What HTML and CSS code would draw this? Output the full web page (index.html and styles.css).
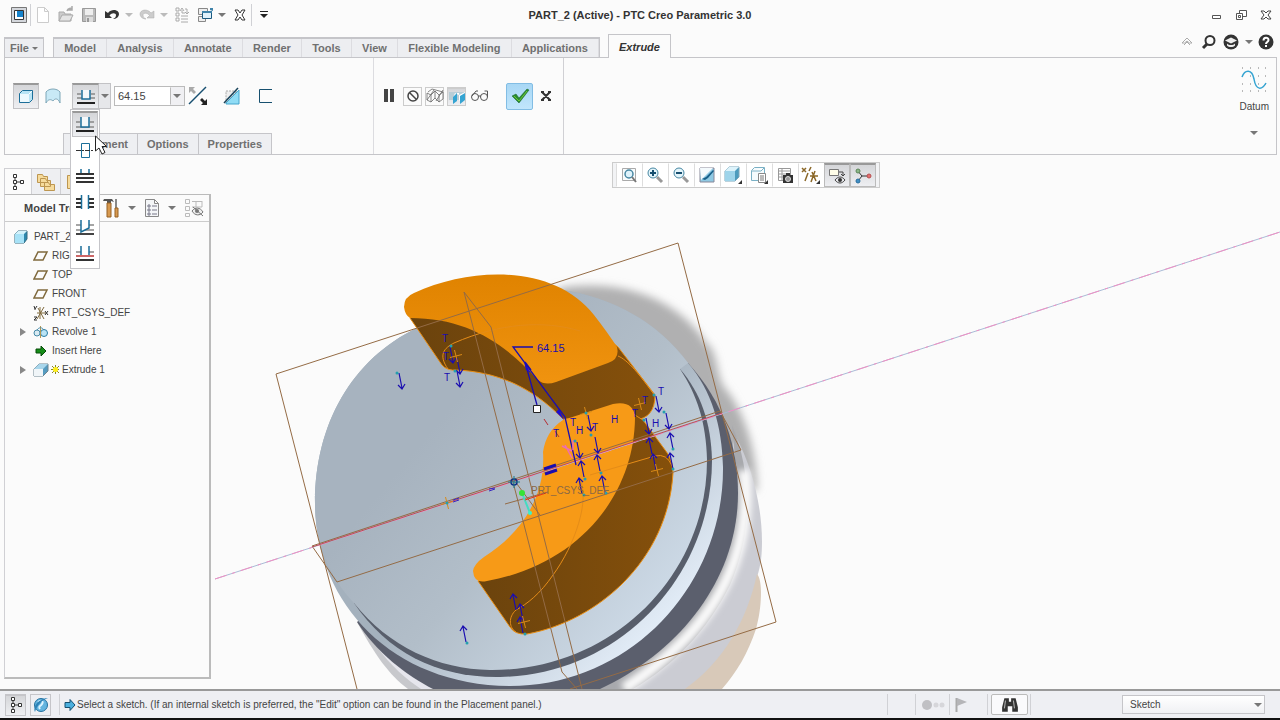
FILE: index.html
```html
<!DOCTYPE html>
<html lang="en">
<head>
    <meta charset="UTF-8">
    <meta name="viewport" content="width=device-width, initial-scale=1.0">
    <title>PART_2 (Active) - PTC Creo Parametric 3.0</title>
    <link rel="stylesheet" href="styles.css">
</head>
<body>
    <div class="window">
        <header class="titlebar">
            <div class="quick">
                <button class="tool app" aria-label="Window menu"><svg width="16" height="16" viewBox="0 0 16 16"><path d="M.5 .5h15v15H.5z" fill="#d4d7dc" stroke="#777"/><path d="M3.500 3.500h9v9h-9z" fill="#fff" stroke="#333"/><path d="M6 4h6v6H6z" fill="#1583cc"/></svg></button>
                <span class="sep"></span>
                <button class="tool" aria-label="New"><svg width="16" height="18" viewBox="0 0 16 18"><path d="M2.500 1.500h7l4 4v11h-11zM9.500 1.500v4h4" fill="#fff" stroke="#ccc"/></svg></button>
                <button class="tool" aria-label="Open"><svg width="18" height="18" viewBox="0 0 18 18"><path d="M2 15V6h5l1 2h6v7z" fill="#ccc" stroke="#aaa"/><path d="M2 15l3-6h11l-3 6z" fill="#e4e4e4" stroke="#aaa"/><path d="M10 5c1-3 4-3 5-2M15 0v4h-4" fill="none" stroke="#aaa" stroke-width="1.500"/></svg></button>
                <button class="tool" aria-label="Save"><svg width="16" height="16" viewBox="0 0 16 16"><path d="M1.500 1.500h13v13h-13z" fill="#bbb" stroke="#999"/><path d="M4 2h8v6H4z" fill="#eee"/><path d="M5 10h7v5H5z" fill="#ddd"/><path d="M6 11h2v4H6z" fill="#999"/></svg></button>
                <button class="tool" aria-label="Undo"><svg width="16" height="16" viewBox="0 0 16 16"><path d="M1 4v7h7L5.500 8.500C8 5 12 6 12 8c0 2-1 3-3 4 3 0 6-2 6-5 0-4-7-6-11-1z" fill="#333"/></svg></button>
                <button class="tool drop" aria-label="Undo list"><i class="caret light"></i></button>
                <button class="tool" aria-label="Redo"><svg width="16" height="16" viewBox="0 0 16 16"><path d="M15 4v7H8l2.500-2.500C8 5 4 6 4 8c0 2 1 3 3 4-3 0-6-2-6-5 0-4 7-6 11-1z" fill="#ccc" stroke="#aaa" stroke-width=".5"/></svg></button>
                <button class="tool drop" aria-label="Redo list"><i class="caret light"></i></button>
                <button class="tool" aria-label="Regenerate"><svg width="16" height="16" viewBox="0 0 16 16"><path d="M2 1h3v3H2zM2 6h3v3H2zM2 11h3v3H2zM7 9h7M7 12h7M7 15h7M8 3v3h3M6 4l2-3 2 3M13 6V2h-2M11 5l2 2 2-2" fill="none" stroke="#aaa"/></svg></button>
                <button class="tool" aria-label="Windows"><svg width="18" height="16" viewBox="0 0 18 16"><path d="M2.500 1.500h9v6h-9zM2.500 9.500h7v5h-7z" fill="#eee" stroke="#888"/><path d="M6.500 4.500h9v7h-9z" fill="#dff1fb" stroke="#1b5a80"/><path d="M6 4h10v2H6zM14 3V1h3v3" fill="#3f83aa"/></svg></button>
                <button class="tool drop" aria-label="Window list"><i class="caret"></i></button>
                <button class="tool" aria-label="Close window"><svg width="14" height="14" viewBox="0 0 14 14"><path d="M2 2h3l2 3 2-3h3L9 7l3 5H9L7 9l-2 3H2l3-5z" fill="#fff" stroke="#333"/></svg></button>
                <span class="sep"></span>
                <button class="tool drop" aria-label="Customize toolbar"><svg width="10" height="10" viewBox="0 0 10 10"><path d="M1 1h8v1H1zM1 4h8L5 8z" fill="#222"/></svg></button>
            </div>
            <h1>PART_2 (Active) - PTC Creo Parametric 3.0</h1>
            <div class="window-buttons">
                <button class="tool" aria-label="Minimize"><svg width="12" height="12" viewBox="0 0 12 12"><path d="M2.500 6.500h8v3h-8z" fill="#fff" stroke="#555"/></svg></button>
                <button class="tool" aria-label="Restore"><svg width="12" height="12" viewBox="0 0 12 12"><path d="M4.500 1.500h7v6h-7z" fill="#fff" stroke="#555"/><path d="M1.500 4.500h6v6h-6z" fill="#fff" stroke="#555"/><path d="M3.500 6.500h2v2h-2z" fill="none" stroke="#555"/></svg></button>
                <button class="tool" aria-label="Close"><svg width="14" height="14" viewBox="0 0 14 14"><path d="M2 3h3l2 2 2-2h3L9 7l3 4H9L7 9l-2 2H2l3-4z" fill="#fff" stroke="#444"/></svg></button>
            </div>
        </header>

        <nav class="tabs">
            <button class="file-tab">File <i class="caret"></i></button>
            <div class="tab-group">
                <button>Model</button>
                <button>Analysis</button>
                <button>Annotate</button>
                <button>Render</button>
                <button>Tools</button>
                <button>View</button>
                <button>Flexible Modeling</button>
                <button>Applications</button>
            </div>
            <button class="active-tab">Extrude</button>
            <div class="help">
                <button class="tool" aria-label="Minimize ribbon"><svg width="12" height="10" viewBox="0 0 12 10"><path d="M1 6l5-5 5 5H8.500L6 4 3.500 6zM3 8l3-3 3 3" fill="#fff" stroke="#aaa"/></svg></button>
                <button class="tool" aria-label="Search"><svg width="16" height="16" viewBox="0 0 16 16"><circle cx="9" cy="6.500" r="4.500" fill="none" stroke="#333" stroke-width="2"/><path d="M6 10l-4 4" stroke="#333" stroke-width="3"/></svg></button>
                <button class="tool" aria-label="Learning"><svg width="16" height="16" viewBox="0 0 16 16"><circle cx="8" cy="8" r="7.500" fill="#333"/><path d="M2 6.500l6-3 6 3-6 3z" fill="#eee"/><path d="M4 9.500c2 2 6 2 8 0v2c-2 2-6 2-8 0z" fill="#eee"/></svg></button>
                <button class="tool drop" aria-label="Learning list"><i class="caret"></i></button>
                <button class="tool" aria-label="Help"><svg width="16" height="16" viewBox="0 0 16 16"><circle cx="8" cy="8" r="7.500" fill="#333"/><path d="M5.500 6.500C5.500 3 10.500 3 10.500 6c0 2-2.500 2-2.500 4M8 11v2" fill="none" stroke="#fff" stroke-width="2"/></svg></button>
            </div>
        </nav>

        <section class="ribbon">
            <div class="dashboard">
                <div class="controls">
                    <button class="tool pressed solid" aria-label="Solid"><svg width="16" height="16" viewBox="0 0 16 16"><path d="M1.500 4.500l3-3h10v9l-3 3h-10z" fill="#b9e4f5" stroke="#1b6e99"/><path d="M2 5h9v8H2z" fill="#edf9fe"/><path d="M11 5l3-3" stroke="#fff"/></svg></button>
                    <button class="tool" aria-label="Surface"><svg width="18" height="18" viewBox="0 0 18 18"><path d="M2 5c3-4 11-4 14 0v11c-2-5-5-5-7-2-2-2-5-2-7 2z" fill="#c8e9f6" stroke="#7fa7b8"/></svg></button>
                    <div class="depth">
                        <button class="tool pressed" aria-label="Depth: blind"><svg width="20" height="18" viewBox="0 0 20 18"><path d="M1 6h4M15 6h4M1 10h18" stroke="#888" stroke-width="1.500"/><path d="M6 2v9h8V2" fill="#f4f8fa" stroke="#1b6e99" stroke-width="1.500"/><path d="M1 15h18" stroke="#222" stroke-width="2"/></svg></button>
                        <button class="tool arrow" aria-label="Depth options"><i class="caret"></i></button>
                        <div class="menu">
                            <button class="tool pressed" aria-label="Blind"><svg width="20" height="18" viewBox="0 0 20 18"><path d="M1 6h4M15 6h4M1 11h18" stroke="#888" stroke-width="1.500"/><path d="M6 1v10h8V1" fill="#f4f8fa" stroke="#1b6e99" stroke-width="1.500"/><path d="M1 15h18" stroke="#222" stroke-width="2"/></svg></button>
                            <button class="tool" aria-label="Symmetric"><svg width="20" height="18" viewBox="0 0 20 18"><path d="M6.500 2.500h8v14h-8z" fill="#fff" stroke="#1b6e99"/><path d="M1 9.500h18" stroke="#333" stroke-dasharray="5 1 2 1"/></svg></button>
                            <button class="tool" aria-label="To next"><svg width="20" height="18" viewBox="0 0 20 18"><path d="M6 2v5M14 2v5" stroke="#1b6e99" stroke-width="1.500"/><path d="M1 7h18M1 11h18M1 15h18" stroke="#333" stroke-width="2"/></svg></button>
                            <button class="tool" aria-label="Through all"><svg width="20" height="18" viewBox="0 0 20 18"><path d="M1 6h5M14 6h5M1 10h5M14 10h5M1 14h5M14 14h5" stroke="#333" stroke-width="2"/><path d="M6.500 2v14M13.500 2v14" stroke="#1b6e99" stroke-width="1.500"/></svg></button>
                            <button class="tool" aria-label="Through until"><svg width="20" height="18" viewBox="0 0 20 18"><path d="M1 6h5M14 6h5M1 11h18" stroke="#888" stroke-width="1.500"/><path d="M6 1v12l8-4V1" fill="#fff" stroke="#1b6e99" stroke-width="1.500"/><path d="M1 15h18" stroke="#444" stroke-width="2"/></svg></button>
                            <button class="tool" aria-label="To selected"><svg width="20" height="18" viewBox="0 0 20 18"><path d="M1 7h5M14 7h5" stroke="#888" stroke-width="1.500"/><path d="M6 1v9M14 1v9" stroke="#1b6e99" stroke-width="1.500"/><path d="M1 11h18" stroke="#b33" stroke-width="1.500"/><path d="M1 15h18" stroke="#333" stroke-width="2"/></svg></button>
                            <svg class="cursor" width="14" height="20" viewBox="0 0 14 20"><path d="M1.500 1v15l3.500-3 3 6 3-1.500-3-6h4.500z" fill="#fff" stroke="#222"/></svg>
                        </div>
                    </div>
                    <div class="value">
                        <input type="text" value="64.15" aria-label="Depth value">
                        <button class="tool" aria-label="Recent values"><i class="caret"></i></button>
                    </div>
                    <button class="tool flip" aria-label="Flip direction"><svg width="20" height="20" viewBox="0 0 20 20"><path d="M1 18L18 1" stroke="#174f70" stroke-width="1.500"/><path d="M1 1h6L5 3l3 3-2 2-3-3-2 2z" fill="#aaa"/><path d="M19 19h-6l2-2-3-3 2-2 3 3 2-2z" fill="#222"/></svg></button>
                    <button class="tool remove" aria-label="Remove material"><svg width="20" height="18" viewBox="0 0 20 18"><path d="M4 4h11L4 16z" fill="#eee" stroke="#aaa" stroke-dasharray="2 1"/><path d="M4 16L17 3v14H4z" fill="#8fdcf5" stroke="#45a5cc"/><path d="M2 16L16 1" stroke="#17425a" stroke-width="1.500"/></svg></button>
                    <button class="tool thicken" aria-label="Thicken"><svg width="16" height="16" viewBox="0 0 16 16"><path d="M15 1.500H2.500v13H15" fill="none" stroke="#17506f"/></svg></button>
                </div>
                <div class="panel-tabs">
                    <button>Placement</button>
                    <button>Options</button>
                    <button>Properties</button>
                </div>
            </div>
            <div class="actions">
                <button class="tool pause" aria-label="Pause"><svg width="12" height="14" viewBox="0 0 12 14"><path d="M1 0h4v13H1zM7 0h4v13H7z" fill="#444"/></svg></button>
                <button class="tool boxed" aria-label="No preview"><svg width="14" height="14" viewBox="0 0 14 14"><circle cx="7" cy="7" r="5" fill="none" stroke="#444" stroke-width="1.500"/><path d="M3.500 3.500l7 7" stroke="#444" stroke-width="1.500"/></svg></button>
                <button class="tool boxed" aria-label="Unattached preview"><svg width="18" height="16" viewBox="0 0 18 16"><path d="M1 5l4 2v7l-4-2zM5 7l4-4v7l-4 4M9 3l4 4v7l-4-4M13 7l4-3v7l-4 3M2 4l4-3 11 3M1 12L8 2M10 13l7-11" fill="none" stroke="#666" stroke-width=".8"/></svg></button>
                <button class="tool boxed pressed" aria-label="Attached preview"><svg width="18" height="16" viewBox="0 0 18 16"><path d="M1 3h16v8H1z" fill="#b9cdd6"/><path d="M1 4l4 5v5l4-4V4h2v8l6-4V3l-6 3-4-2-2 5z" fill="#fff"/><path d="M5 8l4-4v8l-4 3zM12 7l5-3v7l-5 4z" fill="#35a4d2"/></svg></button>
                <button class="tool glasses" aria-label="Verify"><svg width="20" height="16" viewBox="0 0 20 16"><circle cx="5" cy="9" r="3.500" fill="none" stroke="#555"/><circle cx="14" cy="9" r="3.500" fill="none" stroke="#555"/><path d="M8 8h3M2 8l4-5h2M17.500 9V3h-3" fill="none" stroke="#555"/></svg></button>
                <button class="tool accept" aria-label="Accept"><svg width="20" height="18" viewBox="0 0 20 18"><path d="M2 9l4-2 3 4 8-9 2 1L9 16z" fill="#278a32" stroke="#176323" stroke-width=".5"/><path d="M4 9l5 5 8-10" fill="none" stroke="#72c935"/></svg></button>
                <button class="tool cancel" aria-label="Cancel"><svg width="12" height="12" viewBox="0 0 12 12"><path d="M2 2l8 8M10 2l-8 8M1 2h3M8 2h3M1 10h3M8 10h3" stroke="#333" stroke-width="2"/></svg></button>
            </div>
            <div class="datum">
                <button class="tool"><svg width="26" height="26" viewBox="0 0 26 26"><path d="M1 1h1M9 1h1M17 1h1M24 1h1M1 9h1M9 9h1M17 9h1M24 9h1M1 17h1M9 17h1M17 17h1M24 17h1M1 24h1M9 24h1M17 24h1M24 24h1" stroke="#777"/><path d="M1 10C4 2 11 2 13 12c2 12 8 11 12 4" fill="none" stroke="#35a4d2" stroke-width="1.500"/></svg><span>Datum</span><i class="caret"></i></button>
            </div>
        </section>

        <main class="workspace">
            <aside class="navigator">
                <div class="nav-tabs">
                    <button class="tool current" aria-label="Model tree"><svg width="14" height="18" viewBox="0 0 14 18"><path d="M2.500 1.500h3v3h-3zM2.500 7.500h3v3h-3zM2.500 13.500h3v3h-3zM9.500 7.500h3v3h-3zM4 5v2M4 11v2M6 9h3" fill="#fff" stroke="#333"/></svg></button>
                    <button class="tool" aria-label="Folder browser"><svg width="20" height="20" viewBox="0 0 20 20"><path d="M1.500 2.500h5l1 2h4v6h-10zM4.500 6.500h5l1 2h4v6h-10zM8.500 10.500h4l1 2h5v6h-10z" fill="#f6db9c" stroke="#bd9650"/></svg></button>
                    <button class="tool" aria-label="Favorites"><svg width="18" height="18" viewBox="0 0 18 18"><path d="M1.500 2.500h5l1 2h8v11h-14z" fill="#f6db9c" stroke="#bd9650"/></svg></button>
                </div>
                <div class="tree-panel">
                    <div class="tree-header">
                        <h2>Model Tree</h2>
                        <button class="tool" aria-label="Settings"><svg width="18" height="20" viewBox="0 0 18 20"><path d="M2 1h8l2 3-3-1v2H5V3H1z" fill="#555"/><path d="M5 5h4v14H5z" fill="#d89a50" stroke="#956025"/><path d="M14 1v9" stroke="#888" stroke-width="2"/><path d="M13 10h3v9h-3z" fill="#d89a50" stroke="#956025"/></svg></button>
                        <button class="tool" aria-label="Settings list"><i class="caret"></i></button>
                        <button class="tool" aria-label="Show"><svg width="16" height="20" viewBox="0 0 16 20"><path d="M1.500 1.500h9l4 4v13h-13zM10.500 1.500v4h4" fill="#f4f6f8" stroke="#888"/><path d="M4 7h2v2H4zM4 11h2v2H4zM4 15h2v2H4zM8 8h5M8 12h5M8 16h5" stroke="#778" fill="none"/></svg></button>
                        <button class="tool" aria-label="Show list"><i class="caret"></i></button>
                        <button class="tool" aria-label="Hide tree items"><svg width="20" height="20" viewBox="0 0 20 20"><path d="M1.500 1.500h4v4h-4zM1.500 8.500h4v4h-4zM1.500 15.500h4v3h-4zM8 3.500h10M8 9h4M12 3v6h6V3" fill="none" stroke="#bbb"/><path d="M8 13c3-4 8-4 11 1-3 4-8 4-11-1M9 9l10 9" fill="#eee" stroke="#777"/><circle cx="13" cy="13" r="2" fill="#777"/></svg></button>
                    </div>
                    <ul class="tree">
                        <li class="root"><svg width="14" height="14" viewBox="0 0 14 14"><path d="M1 4l3-3h9v8l-3 4H1z" fill="#2d88ad" stroke="#346b80"/><path d="M1 4h9v9H1z" fill="#a7e2f7"/><path d="M1 4l3-3h9l-3 3z" fill="#d3f2fb"/></svg><span>PART_2</span></li>
                        <li><i></i><svg width="16" height="14" viewBox="0 0 16 14"><path d="M5 3h9l-4 8H1z" fill="none" stroke="#806a3d" stroke-width="1.500"/></svg><span>RIGHT</span></li>
                        <li><i></i><svg width="16" height="14" viewBox="0 0 16 14"><path d="M5 3h9l-4 8H1z" fill="none" stroke="#806a3d" stroke-width="1.500"/></svg><span>TOP</span></li>
                        <li><i></i><svg width="16" height="14" viewBox="0 0 16 14"><path d="M5 3h9l-4 8H1z" fill="none" stroke="#806a3d" stroke-width="1.500"/></svg><span>FRONT</span></li>
                        <li><i></i><svg width="16" height="16" viewBox="0 0 16 16"><path d="M4 8h9M7 2v12M4 14l7-12M5 3l6 11" stroke="#806a3d"/><path d="M1 1l1 3 2-3M2 4v1M12 6l3 4M15 6l-3 4M1 12h3l-3 3h3" fill="none" stroke="#333"/></svg><span>PRT_CSYS_DEF</span></li>
                        <li><i class="expand"></i><svg width="16" height="14" viewBox="0 0 16 14"><circle cx="4" cy="8" r="3" fill="#d9eaf2" stroke="#468aa8"/><circle cx="11" cy="8" r="3.500" fill="#b9e3f4" stroke="#287ca3"/><path d="M7.500 1v12" stroke="#b39650"/><path d="M4 5c2-3 5-3 7 0" fill="none" stroke="#468aa8"/></svg><span>Revolve 1</span></li>
                        <li><i></i><svg width="16" height="14" viewBox="0 0 16 14"><path d="M3 5h5V2l5 5-5 5V9H3z" fill="#168d18" stroke="#064c08"/></svg><span>Insert Here</span></li>
                        <li><i class="expand"></i><svg width="26" height="16" viewBox="0 0 26 16"><path d="M1 7l5-5h9v7l-5 5H1z" fill="#559bc0" stroke="#6c8490"/><path d="M1 7h9v7H1z" fill="#f0f5f8"/><path d="M1 7l5-5h9l-5 5z" fill="#a9d6eb"/><path d="M19 4l7 7M26 4l-7 7M22.500 3v9M18 7.500h9" stroke="#8a8a20"/><circle cx="22.500" cy="7.500" r="2.500" fill="#ffee16"/></svg><span>Extrude 1</span></li>
                    </ul>
                </div>
            </aside>

            <div class="graphics">
                <div class="view-toolbar">
                    <button class="tool" aria-label="Refit"><svg width="18" height="18" viewBox="0 0 18 18"><path d="M2.500 2.500h13v12h-13z" fill="#f8fbfc" stroke="#aaa"/><circle cx="9" cy="8" r="4" fill="#dff3fb" stroke="#4787a2" stroke-width="1.500"/><path d="M12 11l4 5" stroke="#777" stroke-width="2"/></svg></button>
                    <button class="tool" aria-label="Zoom in"><svg width="18" height="18" viewBox="0 0 18 18"><circle cx="7" cy="7" r="5" fill="#e4f5fb" stroke="#4787a2"/><path d="M11 11l5 5" stroke="#999" stroke-width="3"/><path d="M4 7h6M7 4v6" stroke="#174f70" stroke-width="2"/></svg></button>
                    <button class="tool" aria-label="Zoom out"><svg width="18" height="18" viewBox="0 0 18 18"><circle cx="7" cy="7" r="5" fill="#e4f5fb" stroke="#4787a2"/><path d="M11 11l5 5" stroke="#999" stroke-width="3"/><path d="M4 7h6" stroke="#174f70" stroke-width="2"/></svg></button>
                    <button class="tool" aria-label="Repaint"><svg width="18" height="18" viewBox="0 0 18 18"><path d="M2 2h14v14H2z" fill="#8fc9e3" stroke="#889"/><path d="M2 2h13L3 14z" fill="#f4fafd"/><path d="M15 4l-7 7-4 2 3 1 3-2 6-7z" fill="#17608a"/></svg></button>
                    <button class="tool" aria-label="Display style"><svg width="18" height="18" viewBox="0 0 18 18"><path d="M1 5l4-4h10v10l-4 4H1z" fill="#4d9bbd" stroke="#7aa6ba"/><path d="M1 5h10v10H1z" fill="#9ed4ea"/><path d="M1 5l4-4h10l-4 4z" fill="#ddf3fb"/><path d="M18 14v4h-4z" fill="#333"/></svg></button>
                    <button class="tool" aria-label="Saved orientations"><svg width="18" height="18" viewBox="0 0 18 18"><path d="M1.500 4.500l3-3h10v9l-4 4h-9zM2 5h9l3-3" fill="#f5fbfd" stroke="#7ab0c5"/><path d="M8.500 7.500h7v9h-7z" fill="#fff" stroke="#888"/><path d="M10 10h4M10 12h4M10 14h4" stroke="#777"/><path d="M18 14v4h-4z" fill="#333"/></svg></button>
                    <button class="tool" aria-label="View manager"><svg width="18" height="18" viewBox="0 0 18 18"><path d="M2.500 2.500h12v12h-12zM3 5h12M3 8h12M3 11h12M6 3v12" fill="#fff" stroke="#999"/><path d="M7 9h10v8H7zM10 7h4v2h-4z" fill="#333"/><circle cx="12" cy="13" r="2.500" fill="#999" stroke="#ddd"/></svg></button>
                    <button class="tool" aria-label="Datum display"><svg width="20" height="18" viewBox="0 0 20 18"><path d="M1 2l4 4M5 2L1 6M10 1L8 5M7 7l-3 8M9 10h8M11 6l4 9M14 5l-4 11" fill="none" stroke="#8b6829" stroke-width="1.500"/><path d="M19 14v4h-4z" fill="#333"/></svg></button>
                    <button class="tool pressed" aria-label="Annotation display"><svg width="18" height="18" viewBox="0 0 18 18"><path d="M1.500 2.500h9v6h-9z" fill="#fffde8" stroke="#777"/><path d="M11 5h4v4M13 7l2 2 2-2M7 13c3-4 7-4 10 0-3 4-7 4-10 0" fill="none" stroke="#444"/><circle cx="12" cy="13" r="2" fill="#333"/></svg></button>
                    <button class="tool pressed" aria-label="Spin center"><svg width="18" height="18" viewBox="0 0 18 18"><path d="M3 3l5 6-4 5M8 9h7" fill="none" stroke="#333"/><circle cx="4" cy="4" r="2" fill="#8bb787" stroke="#5c8559"/><circle cx="15" cy="9" r="2" fill="#e66e6e" stroke="#b65050"/><circle cx="4" cy="14" r="2" fill="#3f8fc4" stroke="#286d9d"/></svg></button>
                </div>

                <svg class="model" viewBox="211 155 1069 534" role="img" aria-label="Extrude preview of PART_2">
                    <defs>
                        <linearGradient id="face" gradientUnits="userSpaceOnUse" x1="440" y1="420" x2="680" y2="620">
                            <stop offset="0" stop-color="#a7b3bf"/>
                            <stop offset=".4" stop-color="#b2bec9"/>
                            <stop offset="1" stop-color="#d1deeb"/>
                        </linearGradient>
                        <linearGradient id="ring" gradientUnits="userSpaceOnUse" x1="510" y1="510" x2="640" y2="640">
                            <stop offset="0" stop-color="#a4b1bd"/>
                            <stop offset=".3" stop-color="#b7c3cf"/>
                            <stop offset="1" stop-color="#e1ebf6"/>
                        </linearGradient>
                        <linearGradient id="orange" x1="0" y1="0" x2="0" y2="1">
                            <stop offset="0" stop-color="#e08300"/>
                            <stop offset="1" stop-color="#f0930f"/>
                        </linearGradient>
                        <linearGradient id="brown" x1="0" y1="0" x2="1" y2="0">
                            <stop offset="0" stop-color="#6b430d"/>
                            <stop offset="1" stop-color="#85500b"/>
                        </linearGradient>
                        <filter id="soft" x="-20%" y="-20%" width="140%" height="140%"><feGaussianBlur stdDeviation="4"/></filter>
                        <filter id="glow" x="-20%" y="-20%" width="140%" height="140%"><feGaussianBlur stdDeviation="3"/></filter>
                        <g id="up"><path d="M2 16L-1 1M-4 5l3-5 4 4" fill="none" stroke="#1a0db0" stroke-width="1.200"/></g>
                        <g id="down"><path d="M-2 -16L1 -1M-3 -4l4 4 3-5" fill="none" stroke="#1a0db0" stroke-width="1.200"/></g>
                        <g id="mark"><path d="M-6 1.500L6-1.500M-1.500-6L1.500 6" stroke="#d88a18"/></g>
                    </defs>

                    <!-- cast shadow and floor reflection -->
                    <path d="M555 289C620 276 680 300 706 343C718 350 716 375 724 387C744 410 757 450 757 490L700 500L590 330z" fill="#b0b0b1" filter="url(#soft)"/>
                    <path d="M735 435C757 475 765 525 761 560C758 577 756 580 757 573L760 589C762 625 742 664 720 689H560L700 600z" fill="#cbccd3"/>
                    <path d="M757 574C763 580 762 608 756 629C748 653 737 672 722 689H685C724 661 747 620 757 574z" fill="#d8c9b9"/>
                    <path d="M357 622C375 655 389 675 408 689H450z" fill="#c7c8cc"/>
                    <path d="M377 647C390 665 407 680 421 689H440z" fill="#e6e6ed"/>
                    <path d="M732 425C753 475 752 535 730 585C707 631 674 665 633 689H590L700 595L738 490z" fill="#a8a9ad"/>
                    <path d="M744 470C752 535 730 594 682 642C665 659 647 674 624 689" fill="none" stroke="#fafafa" stroke-width="12" filter="url(#glow)"/>

                    <!-- revolved body, outer wall first -->
                    <path d="M357 622C376 652 407 676 433 689H600C681 651 738 578 738 493C738 448 724 402 688 363z" fill="#5b5f6d"/>
                    <path d="M417 328C352 359 315 424 315 503C315 600 389 685 510 686C632 686 724 584 723 467C722 426 712 391 688 363C658 322 613 298 563 290z" fill="url(#ring)"/>
                    <path d="M354 603C388 653 438 678 500 677C620 675 712 576 712 460C711 423 701 393 680 369z" fill="#585e6b"/>
                    <path d="M417 328C352 359 315 424 315 503C315 540 327 574 354 603C389 647 438 669 490 670C612 671 707 576 707 460C706 422 697 395 680 369L688 363C658 322 613 298 563 290z" fill="url(#face)"/>

                    <!-- extruded lobes -->
                    <path d="M410 318L442 365Q447 371 457 370C495 372 530 385 563 419L635 420Q655 418 655 395L618 347L560 300H450z" fill="url(#brown)" stroke="#e98d10"/>
                    <path d="M404 307Q404 297 414 293C475 265 556 266 594 315Q608 333 617 347Q620 359 608 363L556 382Q545 386 538 380C505 344 468 318 410 318Q405 315 404 307z" fill="url(#orange)"/>
                    <path d="M478 581L510 627Q515 635 527 634C598 621 668 560 673 473Q673 463 668 454L643 420L630 412z" fill="url(#brown)" stroke="#e98d10"/>
                    <path d="M563 420L613 404Q634 400 635 418C634 497 577 565 487 581Q474 584 473 571Q474 564 484 557C520 534 546 498 543 452Q546 431 563 420z" fill="#f79a17"/>
                    <g fill="none" stroke="#e58c18">
                        <path d="M448 369C438 355 444 348 454 343C500 323 544 320 580 331"/>
                        <path d="M618 356C628 360 640 375 655 396"/>
                        <path d="M580 480C590 500 575 545 553 575C540 594 527 604 516 610C508 617 509 628 516 632"/>
                        <path d="M590 475L655 456Q667 453 672 466"/>
                    </g>

                    <!-- datum planes -->
                    <g fill="none" stroke="#946b45">
                        <path d="M357 689L276 374L678 243L776 622L570 689"/>
                        <path d="M312 546L720 411L741 450L337 582z"/>
                        <path d="M582 689L491 327L464 292L562 672L577 689"/>
                        <path d="M505 504L548 492M514 480L540 515"/>
                    </g>

                    <!-- axis -->
                    <path d="M215 579L1280 232" stroke="#a9bbd6"/>
                    <path d="M215 579L1280 232" stroke="#f28fc4" stroke-dasharray="12 6 3 6"/>
                    <path d="M312 547L722 413" stroke="#bd4e56"/>

                    <!-- sketch dimension and constraints -->
                    <path d="M533 347H513L565 417L576 465M525 362L537 405M525 362l6 8" fill="none" stroke="#1a0db0" stroke-width="1.300"/>
                    <path d="M524 362l7 11-5-3zM559 409l5 11-8-8z" fill="#1a0dd0"/>
                    <path d="M533.500 405.500h7v7h-7z" fill="#fff" stroke="#222"/>
                    <path d="M544 469l12-4M545 474l12-4" stroke="#1a0db0" stroke-width="3"/>
                    <path d="M453 502l6-2M453 500l6-2M489 489l6-1M489 491l6-2" stroke="#3828c0"/>
                    <path d="M544 419l4 6M555 431l4 6" stroke="#b42d32"/>
                    <path d="M562 446l10 5M565 445l7 13M573 440v10" stroke="#ee6db2" stroke-width="1.500"/>
                    <circle cx="514" cy="482" r="3" fill="none" stroke="#102d88" stroke-width="1.500"/>
                    <path d="M508 482h12M514 476v12" stroke="#167c8b"/>
                    <path d="M522 493l8 20" stroke="#43dcc2" stroke-width="2"/>
                    <circle cx="522" cy="493" r="3" fill="#35e335"/>
                    <circle cx="530" cy="513" r="2" fill="#38f1cc"/>
                    <path d="M525 500l21-7" stroke="#e73718"/>
                    <use href="#down" x="401" y="389"/>
                    <use href="#down" x="459" y="387"/>
                    <use href="#down" x="452" y="363"/>
                    <use href="#down" x="459" y="374"/>
                    <use href="#down" x="590" y="431"/>
                    <use href="#down" x="579" y="458"/>
                    <use href="#down" x="597" y="453"/>
                    <use href="#down" x="658" y="412"/>
                    <use href="#down" x="668" y="429"/>
                    <use href="#down" x="648" y="434"/>
                    <use href="#up" x="464" y="626"/>
                    <use href="#up" x="514" y="594"/>
                    <use href="#up" x="521" y="604"/>
                    <use href="#up" x="521" y="617"/>
                    <use href="#up" x="582" y="461"/>
                    <use href="#up" x="580" y="478"/>
                    <use href="#up" x="598" y="455"/>
                    <use href="#up" x="603" y="476"/>
                    <use href="#up" x="650" y="438"/>
                    <use href="#up" x="654" y="454"/>
                    <use href="#up" x="671" y="433"/>
                    <use href="#up" x="671" y="453"/>
                    <use href="#mark" x="456" y="356"/>
                    <use href="#mark" x="447" y="503"/>
                    <use href="#mark" x="640" y="404"/>
                    <use href="#mark" x="586" y="413"/>
                    <use href="#mark" x="657" y="470"/>
                    <use href="#mark" x="524" y="622"/>
                    <g fill="#259fae">
                        <circle cx="397" cy="373" r="1.500"/><circle cx="451" cy="346" r="1.500"/><circle cx="455" cy="371" r="1.500"/>
                        <circle cx="447" cy="503" r="1.500"/><circle cx="467" cy="643" r="1.500"/><circle cx="525" cy="634" r="1.500"/>
                        <circle cx="586" cy="413" r="1.500"/><circle cx="591" cy="435" r="1.500"/><circle cx="575" cy="441" r="1.500"/>
                        <circle cx="585" cy="479" r="1.500"/><circle cx="601" cy="473" r="1.500"/><circle cx="584" cy="495" r="1.500"/>
                        <circle cx="606" cy="493" r="1.500"/><circle cx="654" cy="395" r="1.500"/><circle cx="664" cy="412" r="1.500"/>
                        <circle cx="644" cy="420" r="1.500"/><circle cx="673" cy="449" r="1.500"/><circle cx="673" cy="469" r="1.500"/>
                    </g>
                    <g class="labels">
                        <text class="dimension" x="537" y="352">64.15</text>
                        <text x="442" y="342">T</text>
                        <text x="444" y="381">T</text>
                        <text x="443" y="360">T</text>
                        <text x="570" y="426">T</text>
                        <text x="553" y="437">T</text>
                        <text x="576" y="434">H</text>
                        <text x="592" y="431">T</text>
                        <text x="611" y="423">H</text>
                        <text x="632" y="417">T</text>
                        <text x="642" y="404">T</text>
                        <text x="658" y="395">T</text>
                        <text x="652" y="427">H</text>
                        <text class="csys" x="531" y="494">PRT_CSYS_DEF</text>
                    </g>
                </svg>
            </div>
        </main>

        <footer class="statusbar">
            <button class="tool pressed" aria-label="Toggle navigator"><svg width="14" height="18" viewBox="0 0 14 18"><path d="M2.500 1.500h3v3h-3zM2.500 7.500h3v3h-3zM2.500 13.500h3v3h-3zM9.500 7.500h3v3h-3zM4 5v2M4 11v2M6 9h3" fill="#fff" stroke="#333"/></svg></button>
            <button class="tool" aria-label="Toggle browser"><svg width="16" height="18" viewBox="0 0 16 18"><circle cx="8" cy="9" r="6.500" fill="#63b4df" stroke="#24719e"/><path d="M5 6c3-2 6-1 4 2s-4 2-2 5" fill="none" stroke="#ddf4ff" stroke-width="2"/><path d="M2 16C-1 10 7 2 15 2c-6 2-11 7-13 14" fill="#2e83b7"/></svg></button>
            <span class="sep"></span>
            <svg width="12" height="12" viewBox="0 0 12 12"><path d="M1 3.500h5v-3l5 5.500-5 5.500v-3H1z" fill="#4bafdd" stroke="#154f70"/></svg>
            <p>Select a sketch. (If an internal sketch is preferred, the "Edit" option can be found in the Placement panel.)</p>
            <div class="status-tools">
                <span class="sep"></span>
                <span class="sep far"></span>
                <svg class="dots" width="26" height="14" viewBox="0 0 26 14"><circle cx="8" cy="7" r="5" fill="#c0c0c4"/><circle cx="17" cy="7" r="2.500" fill="#d6d6da"/><circle cx="23" cy="7" r="2.500" fill="#d6d6da"/></svg>
                <span class="sep"></span>
                <svg class="flag" width="12" height="16" viewBox="0 0 12 16"><path d="M1.500 1v14" stroke="#aaa" stroke-width="2"/><path d="M2 1l10 4-10 4z" fill="#b5b5b8"/></svg>
                <span class="sep"></span>
                <button class="tool find" aria-label="Find"><svg width="18" height="18" viewBox="0 0 16 16"><path d="M3 2h4v3h2V2h4l2 8v4h-5V9H6v5H1v-4z" fill="#333"/><path d="M4 4l-1 7M11 4l1 7" stroke="#aaa"/></svg></button>
                <span class="sep"></span>
            </div>
            <div class="filter">
                <select aria-label="Selection filter"><option>Sketch</option></select>
                <i class="caret"></i>
            </div>
        </footer>
    </div>
</body>
</html>
```

FILE: styles.css
```css
* {
    box-sizing: border-box;
}
body {
    margin: 0;
    font-family: "Liberation Sans", Arial, sans-serif;
    font-size: 10px;
    color: #444;
    background-color: #fbfbfb;
}
button, input, select {
    font-family: inherit;
    color: inherit;
}
.window {
    display: flex;
    flex-direction: column;
    height: 100vh;
    overflow: hidden;
    border-bottom: 2px solid #111;
}
svg {
    display: block;
    flex: none;
}
.tool {
    display: flex;
    align-items: center;
    justify-content: center;
    flex: none;
    padding: 0;
    border: 1px solid transparent;
    background: none;
}
.pressed {
    background: linear-gradient(#d5d6d9, #eeeff2);
    border: 1px solid #c2c2c5;
    border-top: 2px solid #999;
}
.caret {
    display: inline-block;
    flex: none;
    border: 4px solid transparent;
    border-top-color: #777;
    border-bottom: 0;
}
.caret.light {
    border-top-color: #bbb;
}
.sep {
    width: 1px;
    align-self: stretch;
    background-color: #d0d1d5;
}

/* title bar */
.titlebar {
    display: grid;
    grid-template-columns: 1fr auto 1fr;
    align-items: center;
    height: 30px;
    flex: none;
}
.titlebar h1 {
    margin: 0;
    font-size: 11px;
    color: #333;
}
.quick {
    display: flex;
    align-items: center;
    height: 22px;
    padding-left: 7px;
}
.quick .tool {
    width: 23px;
}
.quick .drop {
    width: 12px;
}
.quick .drop:last-child {
    width: 24px;
}
.window-buttons {
    display: flex;
    justify-content: flex-end;
    gap: 1px;
    padding-right: 2px;
}
.window-buttons .tool {
    width: 24px;
}

/* ribbon tabs */
.tabs {
    display: flex;
    align-items: flex-end;
    height: 28px;
    flex: none;
    padding: 0 3px 0 4px;
    position: relative;
    z-index: 1;
}
.tabs button {
    font-size: 11px;
    font-weight: bold;
    color: #707070;
}
.file-tab, .tab-group {
    height: 21px;
    background-color: #edeef1;
    border: 1px solid #c5c5c9;
    border-top-width: 2px;
}
.file-tab {
    width: 40px;
    padding: 0 0 1px;
}
.file-tab .caret {
    border-width: 3px;
    border-bottom: 0;
    vertical-align: middle;
}
.tab-group {
    display: flex;
    flex: 0 1 547px;
    margin: 0 8px 0 9px;
}
.tab-group button {
    flex: 1 0 auto;
    padding: 0 9px 1px;
    border: 0;
    border-right: 1px solid #dcdce0;
    background: none;
}
.tabs .active-tab {
    height: 24px;
    padding: 0 10px;
    border: 1px solid #c5c5c9;
    border-bottom: 0;
    background-color: #fbfbfb;
    font-style: italic;
    color: #333;
}
.help {
    display: flex;
    align-items: center;
    height: 24px;
    margin-left: auto;
    padding-bottom: 8px;
}
.help .tool {
    width: 22px;
}
.help .drop {
    width: 13px;
}

/* ribbon */
.ribbon {
    display: flex;
    flex: none;
    height: 98px;
    margin: -1px 3px 0 4px;
    border: 1px solid #c5c5c9;
}
.dashboard {
    display: flex;
    flex-direction: column;
    width: 369px;
    padding-top: 25px;
    border-right: 1px solid #dcdce0;
}
.controls {
    display: flex;
    align-items: center;
    height: 26px;
    padding-left: 8px;
}
.controls .solid {
    width: 26px;
    height: 26px;
    margin-right: 4px;
}
.depth {
    display: flex;
    position: relative;
    width: 39px;
    height: 26px;
    margin: 0 3px 0 9px;
}
.depth > .tool {
    width: 27px;
}
.depth > .arrow {
    width: 12px;
    background-color: #e6e7ea;
    border-color: #c2c2c5;
    border-left: 0;
}
.menu {
    position: absolute;
    top: 26px;
    left: -2px;
    z-index: 5;
    display: flex;
    flex-direction: column;
    width: 30px;
    padding: 1px;
    border: 1px solid #c5c5c9;
    background-color: #fff;
}
.menu .tool {
    height: 26px;
}
.cursor {
    position: absolute;
    top: 25px;
    left: 23px;
}
.value {
    display: flex;
    width: 71px;
    height: 20px;
    border: 1px solid #bbb;
    background-color: #fff;
}
.value input {
    flex: 1;
    width: 0;
    padding: 0 3px;
    border: 0;
    font-size: 11px;
}
.value .tool {
    width: 14px;
    border-left-color: #bbb;
    background-color: #f0f0f3;
}
.flip {
    margin-left: 2px;
}
.remove {
    margin-left: 12px;
}
.thicken {
    margin-left: 13px;
}
.panel-tabs {
    display: flex;
    margin: auto 0 0 58px;
    height: 21px;
}
.panel-tabs button {
    padding: 0 9px 1px;
    border: 1px solid #c5c5c9;
    border-width: 1px 0 0 1px;
    background-color: #eeeff2;
    font-size: 11px;
    font-weight: bold;
    color: #707070;
}
.panel-tabs button:last-child {
    border-right-width: 1px;
}
.actions {
    display: flex;
    align-items: center;
    width: 190px;
    height: 100%;
    padding: 0 8px 20px 8px;
    border-right: 1px solid #d0d0d4;
}
.pause {
    margin-right: 7px;
}
.boxed {
    width: 19px;
    height: 19px;
    margin-right: 3px;
    border-color: #ccc;
}
.accept {
    width: 27px;
    height: 27px;
    margin: 0 6px 0 15px;
    border: 1px solid #82bde4;
    border-radius: 2px;
    background: linear-gradient(#a8d7f5, #c1e6fc);
}
.datum {
    margin-left: auto;
    padding: 8px 6px 0 0;
}
.datum .tool {
    flex-direction: column;
    font-size: 10px;
}
.datum .tool span {
    margin: 8px 0 19px;
}

/* navigator */
.workspace {
    display: flex;
    flex: 1;
    min-height: 0;
}
.navigator {
    display: flex;
    flex-direction: column;
    width: 207px;
    margin: 13px 0 10px 4px;
}
.nav-tabs {
    display: flex;
    height: 27px;
}
.nav-tabs .tool {
    width: 29px;
    border: 1px solid #d0d0d4;
    border-left: 0;
    background-color: #eeeff2;
}
.nav-tabs .current {
    width: 28px;
    border-left: 1px solid #d0d0d4;
    border-bottom: 0;
    background-color: #fbfbfb;
}
.tree-panel {
    flex: 1;
    margin-top: -1px;
    border: 1px solid #d0d0d4;
    border-top-color: #bbb;
    border-right: 2px solid #bbb;
    border-bottom: 2px solid #bbb;
}
.tree-header {
    display: flex;
    align-items: center;
    gap: 6px;
    height: 27px;
    padding-left: 19px;
    border-bottom: 1px solid #ccc;
}
.tree-header h2 {
    width: 71px;
    margin: 0;
    font-size: 11px;
}
.tree {
    margin: 0;
    padding: 5px 0;
    list-style: none;
}
.tree li {
    display: flex;
    align-items: center;
    gap: 3px;
    height: 19px;
    padding-left: 15px;
}
.tree .root {
    padding-left: 9px;
    gap: 6px;
}
.tree i {
    width: 10px;
}
.tree .expand {
    width: 6px;
    margin-right: 4px;
    border: 4px solid transparent;
    border-left: 6px solid #888;
    border-right: 0;
}

/* graphics area */
.graphics {
    position: relative;
    flex: 1;
    min-width: 0;
}
.model {
    width: 100%;
    height: 100%;
}
.view-toolbar {
    position: absolute;
    top: 7px;
    left: 50%;
    transform: translateX(-50%);
    display: flex;
    height: 26px;
    padding: 0 3px;
    border: 1px solid #ccc;
    background-color: #f2f3f5;
}
.view-toolbar .tool {
    width: 26px;
    border-left: 1px solid #ddd;
    background-color: #fff;
}
.view-toolbar .pressed {
    border: 1px solid #bbb;
    border-top: 2px solid #999;
    background-color: #eaebee;
}
.labels {
    font-size: 10px;
    fill: #1a0db0;
}
.labels .dimension {
    font-size: 11px;
}
.labels .csys {
    fill: #8b6844;
}

/* status bar */
.statusbar {
    display: flex;
    align-items: center;
    flex: none;
    height: 29px;
    padding: 3px 15px 3px 5px;
    border-top: 2px solid #999;
    background-color: #eeeff3;
}
.statusbar > .tool {
    width: 21px;
    height: 22px;
    margin-right: 4px;
    border-color: #c5c5c9;
}
.statusbar > .sep {
    margin: 0 4px;
}
.statusbar > svg + p {
    margin: 0 0 0 1px;
}
.status-tools {
    display: flex;
    align-items: center;
    align-self: stretch;
    margin-left: auto;
}
.status-tools .sep {
    margin-right: 3px;
}
.status-tools .far {
    margin-left: 24px;
}
.status-tools .dots {
    margin-right: 4px;
}
.status-tools .flag {
    margin: 0 20px 0 2px;
}
.find {
    width: 37px;
    height: 21px;
    margin-right: 2px;
    border: 1px solid #bbb;
    border-radius: 2px;
    background-color: #fafafc;
}
.filter {
    display: flex;
    align-items: center;
    position: relative;
    width: 143px;
    margin-left: 88px;
}
.filter select {
    appearance: none;
    width: 100%;
    height: 19px;
    padding: 0 7px;
    border: 1px solid #c5c5c9;
    border-radius: 0;
    background: linear-gradient(#fff, #f0f1f4);
    font-size: 10px;
}
.filter .caret {
    position: absolute;
    right: 3px;
    pointer-events: none;
}
```
